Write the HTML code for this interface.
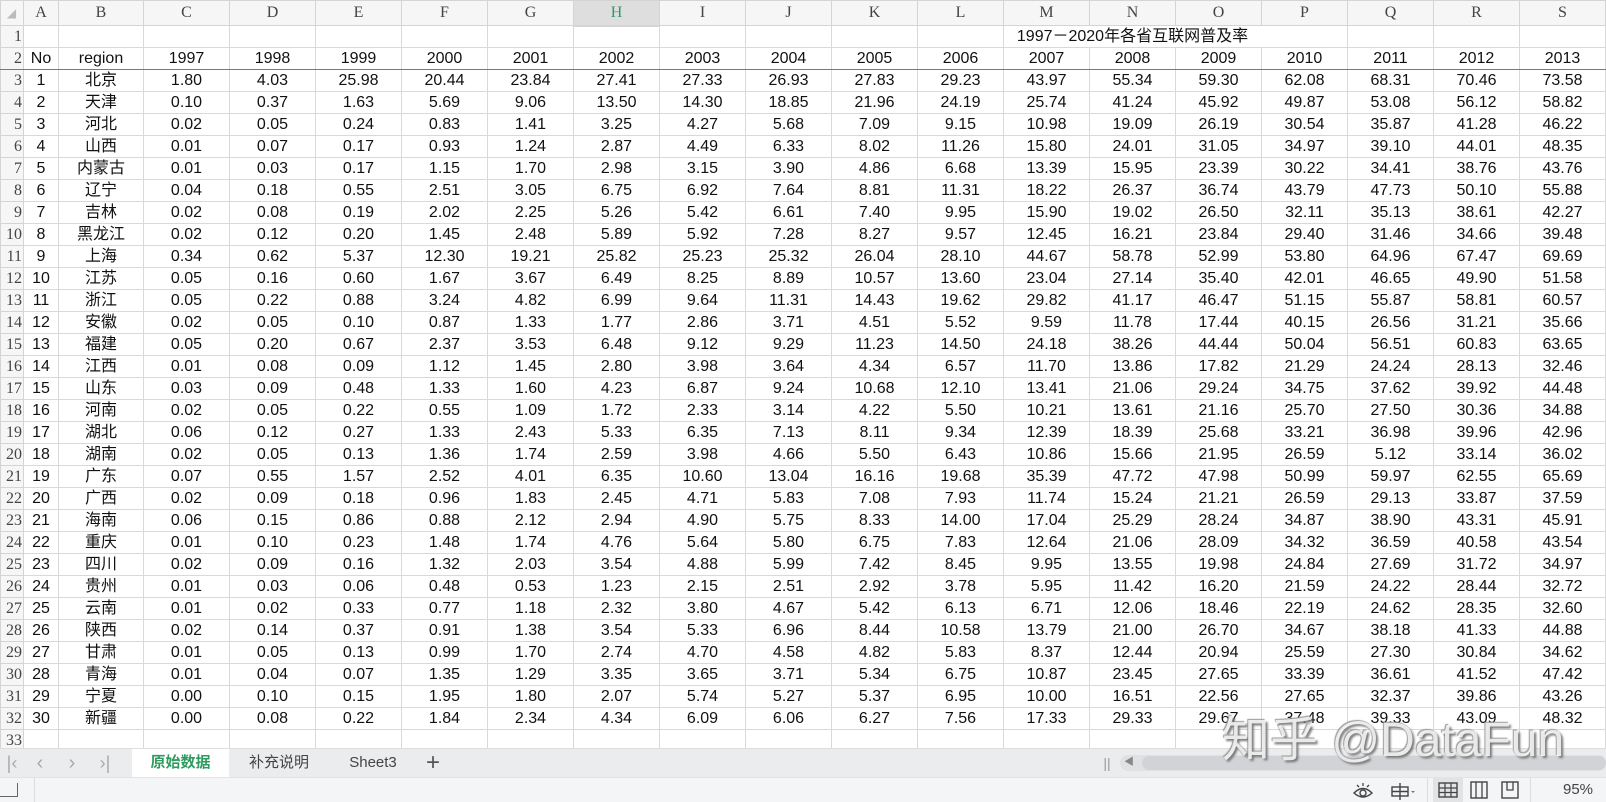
<!DOCTYPE html>
<html><head><meta charset="utf-8"><style>
*{margin:0;padding:0;box-sizing:border-box}
body{width:1606px;height:802px;overflow:hidden;background:#fff;position:relative;font-family:"Liberation Sans","Noto Sans CJK SC",sans-serif}
table{position:absolute;left:0;top:0;border-collapse:collapse;table-layout:fixed;width:1605px}
td{border:1px solid #d9d9d9;height:22px;text-align:center;font-size:16px;color:#111;white-space:nowrap;overflow:hidden;padding:0;line-height:20px}
tr.h td{height:25px;background:#f6f6f6;font-family:"Liberation Serif",serif;color:#444;font-size:16px;border-color:#d4d4d4}
td.r{text-align:right;font-family:"Liberation Serif",serif;color:#444;background:#f6f6f6;padding-right:1px;border-color:#d4d4d4}
td.sel{background:#dedede !important;color:#2f9a66 !important;border-bottom:2px solid #2f9a66}
tr.g td{border-bottom:1px solid #3b9a74}
.tabs{position:absolute;left:0;top:748px;width:1606px;height:29px;background:#ebecee;border-top:1px solid #ddd}
.status{position:absolute;left:0;top:777px;width:1606px;height:25px;background:#f4f5f7;border-top:1px solid #e3e3e3}
.t{position:absolute;top:0;height:28px;line-height:28px;font-size:15px;color:#444;text-align:center}
.wm{position:absolute;left:1222px;top:700px;font-size:48px;color:rgba(250,250,250,.85);text-shadow:2px 2px 2px #777,-1px -1px 1px #999;letter-spacing:0px;font-family:"Liberation Sans","Noto Sans CJK SC",sans-serif}
</style></head><body>
<table>
<colgroup><col style="width:23px"><col style="width:35px"><col style="width:85px"><col style="width:86px"><col style="width:86px"><col style="width:86px"><col style="width:86px"><col style="width:86px"><col style="width:86px"><col style="width:86px"><col style="width:86px"><col style="width:86px"><col style="width:86px"><col style="width:86px"><col style="width:86px"><col style="width:86px"><col style="width:86px"><col style="width:86px"><col style="width:86px"><col style="width:86px"></colgroup>
<tr class="h"><td class="r" style="text-align:center;color:#bbb;font-size:12px">◢</td><td>A</td><td>B</td><td>C</td><td>D</td><td>E</td><td>F</td><td>G</td><td class="sel">H</td><td>I</td><td>J</td><td>K</td><td>L</td><td>M</td><td>N</td><td>O</td><td>P</td><td>Q</td><td>R</td><td>S</td></tr>
<tr><td class="r">1</td><td></td><td></td><td></td><td></td><td></td><td></td><td></td><td></td><td></td><td></td><td></td><td></td><td colspan="3" style="overflow:visible;text-align:center;border-left-color:#fff;border-right-color:#fff">1997－2020年各省互联网普及率</td><td></td><td></td><td></td><td></td></tr>
<tr class="g"><td class="r">2</td><td>No</td><td>region</td><td>1997</td><td>1998</td><td>1999</td><td>2000</td><td>2001</td><td>2002</td><td>2003</td><td>2004</td><td>2005</td><td>2006</td><td>2007</td><td>2008</td><td>2009</td><td>2010</td><td>2011</td><td>2012</td><td>2013</td></tr>
<tr><td class="r">3</td><td>1</td><td>北京</td><td>1.80</td><td>4.03</td><td>25.98</td><td>20.44</td><td>23.84</td><td>27.41</td><td>27.33</td><td>26.93</td><td>27.83</td><td>29.23</td><td>43.97</td><td>55.34</td><td>59.30</td><td>62.08</td><td>68.31</td><td>70.46</td><td>73.58</td></tr>
<tr><td class="r">4</td><td>2</td><td>天津</td><td>0.10</td><td>0.37</td><td>1.63</td><td>5.69</td><td>9.06</td><td>13.50</td><td>14.30</td><td>18.85</td><td>21.96</td><td>24.19</td><td>25.74</td><td>41.24</td><td>45.92</td><td>49.87</td><td>53.08</td><td>56.12</td><td>58.82</td></tr>
<tr><td class="r">5</td><td>3</td><td>河北</td><td>0.02</td><td>0.05</td><td>0.24</td><td>0.83</td><td>1.41</td><td>3.25</td><td>4.27</td><td>5.68</td><td>7.09</td><td>9.15</td><td>10.98</td><td>19.09</td><td>26.19</td><td>30.54</td><td>35.87</td><td>41.28</td><td>46.22</td></tr>
<tr><td class="r">6</td><td>4</td><td>山西</td><td>0.01</td><td>0.07</td><td>0.17</td><td>0.93</td><td>1.24</td><td>2.87</td><td>4.49</td><td>6.33</td><td>8.02</td><td>11.26</td><td>15.80</td><td>24.01</td><td>31.05</td><td>34.97</td><td>39.10</td><td>44.01</td><td>48.35</td></tr>
<tr><td class="r">7</td><td>5</td><td>内蒙古</td><td>0.01</td><td>0.03</td><td>0.17</td><td>1.15</td><td>1.70</td><td>2.98</td><td>3.15</td><td>3.90</td><td>4.86</td><td>6.68</td><td>13.39</td><td>15.95</td><td>23.39</td><td>30.22</td><td>34.41</td><td>38.76</td><td>43.76</td></tr>
<tr><td class="r">8</td><td>6</td><td>辽宁</td><td>0.04</td><td>0.18</td><td>0.55</td><td>2.51</td><td>3.05</td><td>6.75</td><td>6.92</td><td>7.64</td><td>8.81</td><td>11.31</td><td>18.22</td><td>26.37</td><td>36.74</td><td>43.79</td><td>47.73</td><td>50.10</td><td>55.88</td></tr>
<tr><td class="r">9</td><td>7</td><td>吉林</td><td>0.02</td><td>0.08</td><td>0.19</td><td>2.02</td><td>2.25</td><td>5.26</td><td>5.42</td><td>6.61</td><td>7.40</td><td>9.95</td><td>15.90</td><td>19.02</td><td>26.50</td><td>32.11</td><td>35.13</td><td>38.61</td><td>42.27</td></tr>
<tr><td class="r">10</td><td>8</td><td>黑龙江</td><td>0.02</td><td>0.12</td><td>0.20</td><td>1.45</td><td>2.48</td><td>5.89</td><td>5.92</td><td>7.28</td><td>8.27</td><td>9.57</td><td>12.45</td><td>16.21</td><td>23.84</td><td>29.40</td><td>31.46</td><td>34.66</td><td>39.48</td></tr>
<tr><td class="r">11</td><td>9</td><td>上海</td><td>0.34</td><td>0.62</td><td>5.37</td><td>12.30</td><td>19.21</td><td>25.82</td><td>25.23</td><td>25.32</td><td>26.04</td><td>28.10</td><td>44.67</td><td>58.78</td><td>52.99</td><td>53.80</td><td>64.96</td><td>67.47</td><td>69.69</td></tr>
<tr><td class="r">12</td><td>10</td><td>江苏</td><td>0.05</td><td>0.16</td><td>0.60</td><td>1.67</td><td>3.67</td><td>6.49</td><td>8.25</td><td>8.89</td><td>10.57</td><td>13.60</td><td>23.04</td><td>27.14</td><td>35.40</td><td>42.01</td><td>46.65</td><td>49.90</td><td>51.58</td></tr>
<tr><td class="r">13</td><td>11</td><td>浙江</td><td>0.05</td><td>0.22</td><td>0.88</td><td>3.24</td><td>4.82</td><td>6.99</td><td>9.64</td><td>11.31</td><td>14.43</td><td>19.62</td><td>29.82</td><td>41.17</td><td>46.47</td><td>51.15</td><td>55.87</td><td>58.81</td><td>60.57</td></tr>
<tr><td class="r">14</td><td>12</td><td>安徽</td><td>0.02</td><td>0.05</td><td>0.10</td><td>0.87</td><td>1.33</td><td>1.77</td><td>2.86</td><td>3.71</td><td>4.51</td><td>5.52</td><td>9.59</td><td>11.78</td><td>17.44</td><td>40.15</td><td>26.56</td><td>31.21</td><td>35.66</td></tr>
<tr><td class="r">15</td><td>13</td><td>福建</td><td>0.05</td><td>0.20</td><td>0.67</td><td>2.37</td><td>3.53</td><td>6.48</td><td>9.12</td><td>9.29</td><td>11.23</td><td>14.50</td><td>24.18</td><td>38.26</td><td>44.44</td><td>50.04</td><td>56.51</td><td>60.83</td><td>63.65</td></tr>
<tr><td class="r">16</td><td>14</td><td>江西</td><td>0.01</td><td>0.08</td><td>0.09</td><td>1.12</td><td>1.45</td><td>2.80</td><td>3.98</td><td>3.64</td><td>4.34</td><td>6.57</td><td>11.70</td><td>13.86</td><td>17.82</td><td>21.29</td><td>24.24</td><td>28.13</td><td>32.46</td></tr>
<tr><td class="r">17</td><td>15</td><td>山东</td><td>0.03</td><td>0.09</td><td>0.48</td><td>1.33</td><td>1.60</td><td>4.23</td><td>6.87</td><td>9.24</td><td>10.68</td><td>12.10</td><td>13.41</td><td>21.06</td><td>29.24</td><td>34.75</td><td>37.62</td><td>39.92</td><td>44.48</td></tr>
<tr><td class="r">18</td><td>16</td><td>河南</td><td>0.02</td><td>0.05</td><td>0.22</td><td>0.55</td><td>1.09</td><td>1.72</td><td>2.33</td><td>3.14</td><td>4.22</td><td>5.50</td><td>10.21</td><td>13.61</td><td>21.16</td><td>25.70</td><td>27.50</td><td>30.36</td><td>34.88</td></tr>
<tr><td class="r">19</td><td>17</td><td>湖北</td><td>0.06</td><td>0.12</td><td>0.27</td><td>1.33</td><td>2.43</td><td>5.33</td><td>6.35</td><td>7.13</td><td>8.11</td><td>9.34</td><td>12.39</td><td>18.39</td><td>25.68</td><td>33.21</td><td>36.98</td><td>39.96</td><td>42.96</td></tr>
<tr><td class="r">20</td><td>18</td><td>湖南</td><td>0.02</td><td>0.05</td><td>0.13</td><td>1.36</td><td>1.74</td><td>2.59</td><td>3.98</td><td>4.66</td><td>5.50</td><td>6.43</td><td>10.86</td><td>15.66</td><td>21.95</td><td>26.59</td><td>5.12</td><td>33.14</td><td>36.02</td></tr>
<tr><td class="r">21</td><td>19</td><td>广东</td><td>0.07</td><td>0.55</td><td>1.57</td><td>2.52</td><td>4.01</td><td>6.35</td><td>10.60</td><td>13.04</td><td>16.16</td><td>19.68</td><td>35.39</td><td>47.72</td><td>47.98</td><td>50.99</td><td>59.97</td><td>62.55</td><td>65.69</td></tr>
<tr><td class="r">22</td><td>20</td><td>广西</td><td>0.02</td><td>0.09</td><td>0.18</td><td>0.96</td><td>1.83</td><td>2.45</td><td>4.71</td><td>5.83</td><td>7.08</td><td>7.93</td><td>11.74</td><td>15.24</td><td>21.21</td><td>26.59</td><td>29.13</td><td>33.87</td><td>37.59</td></tr>
<tr><td class="r">23</td><td>21</td><td>海南</td><td>0.06</td><td>0.15</td><td>0.86</td><td>0.88</td><td>2.12</td><td>2.94</td><td>4.90</td><td>5.75</td><td>8.33</td><td>14.00</td><td>17.04</td><td>25.29</td><td>28.24</td><td>34.87</td><td>38.90</td><td>43.31</td><td>45.91</td></tr>
<tr><td class="r">24</td><td>22</td><td>重庆</td><td>0.01</td><td>0.10</td><td>0.23</td><td>1.48</td><td>1.74</td><td>4.76</td><td>5.64</td><td>5.80</td><td>6.75</td><td>7.83</td><td>12.64</td><td>21.06</td><td>28.09</td><td>34.32</td><td>36.59</td><td>40.58</td><td>43.54</td></tr>
<tr><td class="r">25</td><td>23</td><td>四川</td><td>0.02</td><td>0.09</td><td>0.16</td><td>1.32</td><td>2.03</td><td>3.54</td><td>4.88</td><td>5.99</td><td>7.42</td><td>8.45</td><td>9.95</td><td>13.55</td><td>19.98</td><td>24.84</td><td>27.69</td><td>31.72</td><td>34.97</td></tr>
<tr><td class="r">26</td><td>24</td><td>贵州</td><td>0.01</td><td>0.03</td><td>0.06</td><td>0.48</td><td>0.53</td><td>1.23</td><td>2.15</td><td>2.51</td><td>2.92</td><td>3.78</td><td>5.95</td><td>11.42</td><td>16.20</td><td>21.59</td><td>24.22</td><td>28.44</td><td>32.72</td></tr>
<tr><td class="r">27</td><td>25</td><td>云南</td><td>0.01</td><td>0.02</td><td>0.33</td><td>0.77</td><td>1.18</td><td>2.32</td><td>3.80</td><td>4.67</td><td>5.42</td><td>6.13</td><td>6.71</td><td>12.06</td><td>18.46</td><td>22.19</td><td>24.62</td><td>28.35</td><td>32.60</td></tr>
<tr><td class="r">28</td><td>26</td><td>陕西</td><td>0.02</td><td>0.14</td><td>0.37</td><td>0.91</td><td>1.38</td><td>3.54</td><td>5.33</td><td>6.96</td><td>8.44</td><td>10.58</td><td>13.79</td><td>21.00</td><td>26.70</td><td>34.67</td><td>38.18</td><td>41.33</td><td>44.88</td></tr>
<tr><td class="r">29</td><td>27</td><td>甘肃</td><td>0.01</td><td>0.05</td><td>0.13</td><td>0.99</td><td>1.70</td><td>2.74</td><td>4.70</td><td>4.58</td><td>4.82</td><td>5.83</td><td>8.37</td><td>12.44</td><td>20.94</td><td>25.59</td><td>27.30</td><td>30.84</td><td>34.62</td></tr>
<tr><td class="r">30</td><td>28</td><td>青海</td><td>0.01</td><td>0.04</td><td>0.07</td><td>1.35</td><td>1.29</td><td>3.35</td><td>3.65</td><td>3.71</td><td>5.34</td><td>6.75</td><td>10.87</td><td>23.45</td><td>27.65</td><td>33.39</td><td>36.61</td><td>41.52</td><td>47.42</td></tr>
<tr><td class="r">31</td><td>29</td><td>宁夏</td><td>0.00</td><td>0.10</td><td>0.15</td><td>1.95</td><td>1.80</td><td>2.07</td><td>5.74</td><td>5.27</td><td>5.37</td><td>6.95</td><td>10.00</td><td>16.51</td><td>22.56</td><td>27.65</td><td>32.37</td><td>39.86</td><td>43.26</td></tr>
<tr><td class="r">32</td><td>30</td><td>新疆</td><td>0.00</td><td>0.08</td><td>0.22</td><td>1.84</td><td>2.34</td><td>4.34</td><td>6.09</td><td>6.06</td><td>6.27</td><td>7.56</td><td>17.33</td><td>29.33</td><td>29.67</td><td>37.48</td><td>39.33</td><td>43.09</td><td>48.32</td></tr>
<tr><td class="r">33</td><td></td><td></td><td></td><td></td><td></td><td></td><td></td><td></td><td></td><td></td><td></td><td></td><td></td><td></td><td></td><td></td><td></td><td></td><td></td></tr>
</table>
<div class="tabs">
 <div class="t" style="left:2px;width:20px;color:#aaa;font-size:18px">|‹</div>
 <div class="t" style="left:30px;width:20px;color:#aaa;font-size:20px">‹</div>
 <div class="t" style="left:62px;width:20px;color:#aaa;font-size:20px">›</div>
 <div class="t" style="left:94px;width:22px;color:#aaa;font-size:18px">›|</div>
 <div class="t" style="left:132px;width:97px;background:#fff;color:#2f9a5e;font-weight:bold">原始数据</div>
 <div class="t" style="left:229px;width:100px">补充说明</div>
 <div class="t" style="left:329px;width:88px;font-family:'Liberation Sans',sans-serif">Sheet3</div>
 <div class="t" style="left:420px;width:26px;font-size:24px;color:#555">+</div>
 <div class="t" style="left:1100px;width:14px;color:#999;font-size:14px">||</div>
 <div style="position:absolute;left:1120px;top:6px;width:486px;height:16px;background:#e0e1e3;border-radius:8px"></div>
 <div style="position:absolute;left:1142px;top:7px;width:464px;height:14px;background:#d2d3d6;border-radius:7px"></div>
 <div class="t" style="left:1122px;width:14px;color:#888;font-size:10px">◀</div>
</div>
<div class="status">
 <div style="position:absolute;left:0;top:5px;width:18px;height:14px;border:1px solid #666;border-left:none;border-top:none"></div>
 <div style="position:absolute;left:34px;top:0;width:1px;height:24px;background:#ddd"></div>
 <svg style="position:absolute;left:1352px;top:3px" width="22" height="20" viewBox="0 0 22 20"><path d="M2 12 Q11 3 20 12 Q11 20 2 12Z" fill="none" stroke="#444" stroke-width="1.4"/><circle cx="11" cy="12" r="3" fill="none" stroke="#444" stroke-width="1.4"/><path d="M11 2v3M5 4l2 2M17 4l-2 2" stroke="#444" stroke-width="1.3"/></svg>
 <svg style="position:absolute;left:1390px;top:3px" width="28" height="20" viewBox="0 0 28 20"><rect x="2" y="6" width="16" height="9" fill="none" stroke="#444" stroke-width="1.4"/><path d="M10 2v17M2 10.5h16" stroke="#444" stroke-width="1.4"/><path d="M21 10l2 2 2-2z" fill="#777"/></svg>
 <div style="position:absolute;left:1427px;top:0;width:1px;height:24px;background:#ddd"></div>
 <div style="position:absolute;left:1433px;top:0;width:30px;height:24px;background:#e2e3e5"></div>
 <svg style="position:absolute;left:1438px;top:3px" width="20" height="18" viewBox="0 0 20 18"><rect x="1" y="2" width="18" height="14" fill="none" stroke="#444" stroke-width="1.4"/><path d="M7 2v14M13 2v14M1 7h18M1 11.5h18" stroke="#444" stroke-width="1.2"/></svg>
 <svg style="position:absolute;left:1469px;top:3px" width="20" height="18" viewBox="0 0 20 18"><rect x="2" y="1" width="16" height="16" fill="none" stroke="#444" stroke-width="1.4"/><path d="M7 1v16M13 1v16" stroke="#444" stroke-width="1.3"/></svg>
 <svg style="position:absolute;left:1500px;top:3px" width="20" height="18" viewBox="0 0 20 18"><rect x="2" y="1" width="16" height="16" fill="none" stroke="#444" stroke-width="1.4"/><path d="M7 1v8h6V1" fill="none" stroke="#444" stroke-width="1.3"/></svg>
 <div style="position:absolute;left:1530px;top:0;width:1px;height:24px;background:#ddd"></div>
 <div style="position:absolute;left:1563px;top:3px;font-size:15px;color:#444">95%</div>
</div>
<div class="wm">知乎 @DataFun</div>
</body></html>
